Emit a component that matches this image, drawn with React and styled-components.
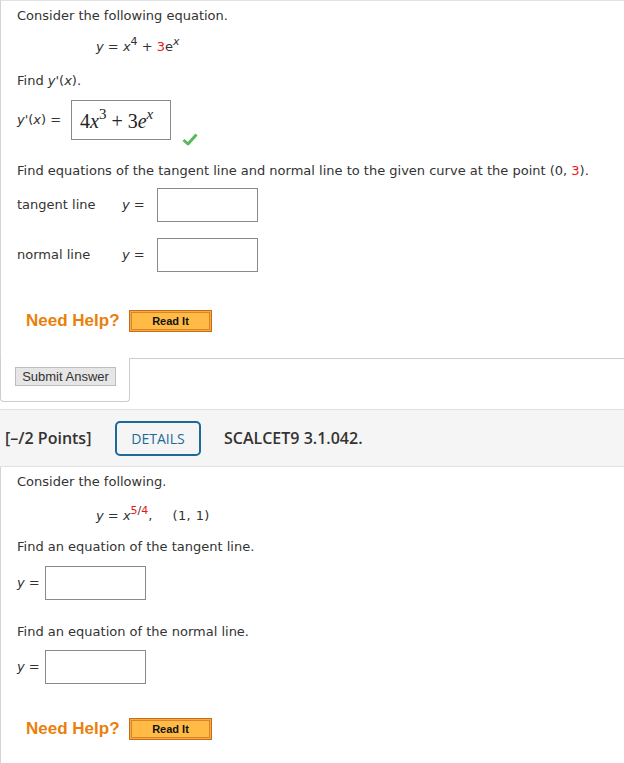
import React from "react"
import styled, { createGlobalStyle } from "styled-components"

const Global = createGlobalStyle`
  body {
    margin: 0;
    background: #fff;
    font-family: "DejaVu Sans", Verdana, sans-serif;
    color: #333;
  }
`

const Page = styled("div")`
  width: 624px;
  height: 763px;
  overflow: hidden;
`
const Panel = styled("div")`
  border-left: 1px solid #d4d4d4;
  border-top: ${(p) => (p.$top ? "1px solid #e2e2e2" : "none")};
  padding: 7px 16px ${(p) => p.$bottom || 0}px;
  font-size: 13px;
  line-height: 16px;
`
const Para = styled("div")`
  margin-top: ${(p) => p.$mt || 0}px;
`
const Display = styled("div")`
  margin-top: ${(p) => p.$mt || 0}px;
  padding-left: 79px;
  white-space: pre;
`
const Point = styled("span")`
  margin-left: 20px;
  letter-spacing: 0.4px;
`
const Red = styled("span")`
  color: #e8161b;
`
const Sup = styled("sup")`
  font-size: 11px;
  line-height: 0;
  vertical-align: 6px;
`
const AnswerRow = styled("div")`
  display: flex;
  align-items: center;
  margin-top: ${(p) => p.$mt || 0}px;
`
const Label = styled("span")`
  width: ${(p) => p.$w}px;
  flex-shrink: 0;
`
const MathBox = styled("div")`
  width: 100px;
  height: 40px;
  box-sizing: border-box;
  border: 1px solid #8a8a8a;
  font-family: "Liberation Serif", "Times New Roman", serif;
  font-size: 20px;
  line-height: 40px;
  padding-left: 8px;
  color: #222;
  white-space: pre;
  i { font-style: italic; }
`
const MSup = styled("sup")`
  font-size: 15px;
  line-height: 0;
  vertical-align: 9px;
`
const Check = styled("svg")`
  margin: 0 0 -6px 11px;
  align-self: flex-end;
`
const InputBox = styled("div")`
  width: 101px;
  height: 34px;
  box-sizing: border-box;
  border: 1px solid #8a8a8a;
  background: #fff;
`
const HelpRow = styled("div")`
  display: flex;
  align-items: center;
  margin-top: ${(p) => p.$mt}px;
  padding-left: 9px;
`
const NeedHelp = styled("span")`
  font-family: "Liberation Sans", Arial, sans-serif;
  font-weight: bold;
  font-size: 17px;
  color: #ea7f0c;
  width: 103px;
`
const ReadIt = styled("button")`
  width: 83px;
  height: 22px;
  padding: 1px;
  box-sizing: border-box;
  border: 1px solid #c36d16;
  background: #f8ab45;
  span {
    display: block;
    height: 100%;
    box-sizing: border-box;
    border: 1px solid #d98427;
    background: #ffbb46;
    font-family: "Liberation Sans", Arial, sans-serif;
    font-weight: bold;
    font-size: 11px;
    line-height: 16px;
    color: #111;
  }
`
const SubmitRow = styled("div")`
  display: flex;
  height: 44px;
`
const SubmitTab = styled("div")`
  width: 130px;
  box-sizing: border-box;
  border: 1px solid #cdcdcd;
  border-top: none;
  border-radius: 0 0 4px 4px;
  padding: 8px 0 0 14px;
`
const Filler = styled("div")`
  flex: 1;
  border-top: 1px solid #cdcdcd;
`
const SubmitBtn = styled("button")`
  width: 101px;
  height: 19px;
  padding: 0;
  border: 1px solid #bdbdbd;
  background: #e6e6e6;
  font-family: "Liberation Sans", Arial, sans-serif;
  font-size: 13px;
  color: #333;
`
const Header = styled("div")`
  margin-top: 7px;
  height: 56px;
  background: #f5f5f5;
  border-top: 1px solid #e2e2e2;
  border-bottom: 1px solid #e2e2e2;
  display: flex;
  align-items: center;
  padding-left: 5px;
  font-family: "Open Sans", "Noto Sans", sans-serif;
  font-weight: 600;
  font-size: 16px;
  color: #333;
`
const Points = styled("span")`
  width: 110px;
`
const Details = styled("div")`
  width: 86px;
  height: 35px;
  box-sizing: border-box;
  border: 2px solid #1b6a9a;
  border-radius: 5px;
  display: flex;
  align-items: center;
  justify-content: center;
  color: #1b6a9a;
  font-size: 14px;
  font-weight: 500;
  margin-right: 23px;
`

const Help = ({ mt }) => (
  <HelpRow $mt={mt}>
    <NeedHelp>Need Help?</NeedHelp>
    <ReadIt><span>Read It</span></ReadIt>
  </HelpRow>
)

const App = () => (
  <Page>
    <Global />
    <Panel $top $bottom={26}>
      <Para>Consider the following equation.</Para>
      <Display $mt={15}>
        <i>y</i> = <i>x</i><Sup>4</Sup> + <Red>3</Red>e<Sup><i>x</i></Sup>
      </Display>
      <Para $mt={18}>Find <i>y</i>'(<i>x</i>).</Para>
      <AnswerRow $mt={11}>
        <Label $w={54}><i>y</i>'(<i>x</i>) =</Label>
        <MathBox>
          4<i>x</i><MSup>3</MSup> + 3<i>e</i><MSup><i>x</i></MSup>
        </MathBox>
        <Check width="16" height="13" viewBox="0 0 16 13">
          <polyline points="1.5,7 6,11 14.5,1.5" fill="none" stroke="#5cb85c" strokeWidth="3" strokeLinejoin="round" />
        </Check>
      </AnswerRow>
      <Para $mt={23}>
        Find equations of the tangent line and normal line to the given curve at the point (0, <Red>3</Red>).
      </Para>
      <AnswerRow $mt={9}>
        <Label $w={105}>tangent line</Label>
        <Label $w={35}><i>y</i> =</Label>
        <InputBox />
      </AnswerRow>
      <AnswerRow $mt={16}>
        <Label $w={105}>normal line</Label>
        <Label $w={35}><i>y</i> =</Label>
        <InputBox />
      </AnswerRow>
      <Help mt={38} />
    </Panel>
    <SubmitRow>
      <SubmitTab>
        <SubmitBtn>Submit Answer</SubmitBtn>
      </SubmitTab>
      <Filler />
    </SubmitRow>
    <Header>
      <Points>[–/2 Points]</Points>
      <Details>DETAILS</Details>
      <span>SCALCET9 3.1.042.</span>
    </Header>
    <Panel $bottom={30}>
      <Para>Consider the following.</Para>
      <Display $mt={18}>
        <i>y</i> = <i>x</i><Sup><Red>5</Red>/<Red>4</Red></Sup>,<Point>(1, 1)</Point>
      </Display>
      <Para $mt={15}>Find an equation of the tangent line.</Para>
      <AnswerRow $mt={11}>
        <Label $w={28}><i>y</i> =</Label>
        <InputBox />
      </AnswerRow>
      <Para $mt={24}>Find an equation of the normal line.</Para>
      <AnswerRow $mt={10}>
        <Label $w={28}><i>y</i> =</Label>
        <InputBox />
      </AnswerRow>
      <Help mt={34} />
    </Panel>
  </Page>
)

export default App
